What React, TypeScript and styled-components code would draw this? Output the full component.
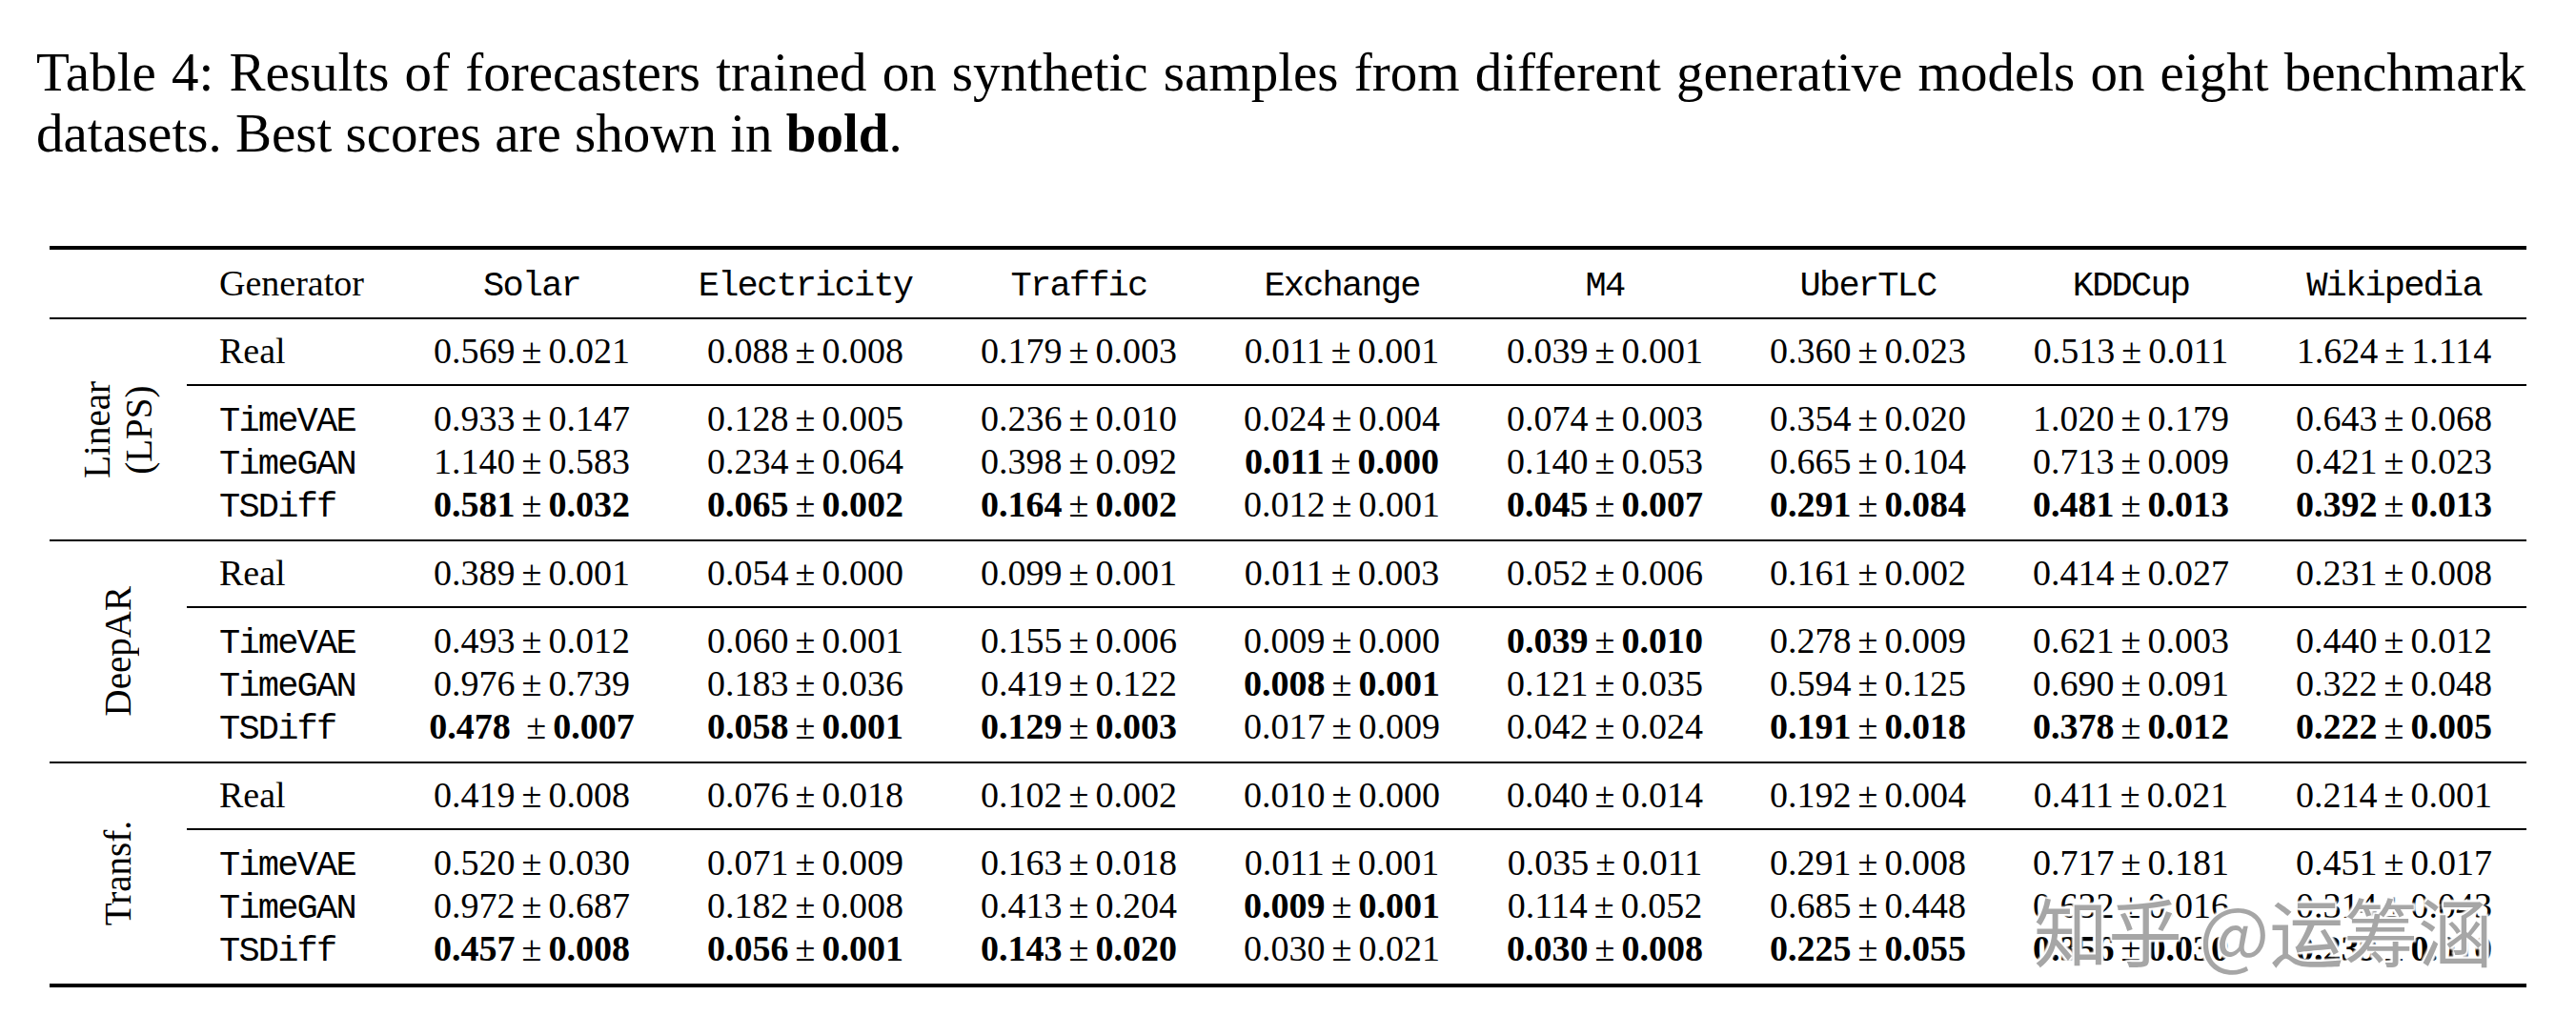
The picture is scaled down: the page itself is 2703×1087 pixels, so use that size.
import React from 'react';
import styled, { createGlobalStyle } from 'styled-components';

const GlobalStyle = createGlobalStyle`
  html, body { margin: 0; padding: 0; background: #ffffff; }
  body { width: 2703px; height: 1087px; overflow: hidden; }
`;

const DATA_COLS = '224px 276px 298px repeat(6, 276px)';
const MONO = `font-family: "Liberation Mono", "Courier New", monospace; font-size: 37px; letter-spacing: -1.8px;`;

const Page = styled.div`
  position: relative;
  width: 2703px;
  height: 1087px;
  font-family: "Liberation Serif", "Times New Roman", serif;
  color: #000;
`;

const Caption = styled.p`
  margin: 0;
  padding: 44px 0 0 38px;
  width: 2612px;
  font-size: 57px;
  line-height: 64px;
  text-align: justify;
  text-align-last: left;
`;

const Table = styled.div`
  margin: 86px 0 0 52px;
  width: 2599px;
  display: flex;
  flex-direction: column;
`;

const Rule = styled.div<{ $w: number }>`
  height: ${(p) => p.$w}px;
  background: #000;
`;

const HeaderRow = styled.div`
  display: grid;
  grid-template-columns: 144px ${DATA_COLS};
  grid-template-rows: 45px;
  align-items: baseline;
  padding: 13px 0;
  font-size: 38px;
  line-height: 45px;
`;

const Group = styled.div`
  display: flex;
  flex-direction: row;
`;

const LabelCell = styled.div`
  width: 144px;
  flex: none;
  display: flex;
  align-items: center;
  justify-content: center;
`;

const RotatedLabel = styled.div`
  writing-mode: vertical-rl;
  transform: rotate(180deg);
  font-size: 39px;
  line-height: 44px;
  text-align: center;
  white-space: nowrap;
`;

const GroupBody = styled.div<{ $bottom: number }>`
  flex: 1;
  display: flex;
  flex-direction: column;
  padding: 11px 0 ${(p) => p.$bottom}px 0;
`;

const CmidRule = styled.div`
  height: 2px;
  background: #000;
  margin: 12px 0;
`;

const Row = styled.div`
  display: grid;
  grid-template-columns: ${DATA_COLS};
  grid-template-rows: 45px;
  align-items: baseline;
  font-size: 38px;
  line-height: 45px;
`;

const NameCell = styled.div<{ $mono?: boolean }>`
  padding-left: 34px;
  text-align: left;
  white-space: nowrap;
  ${(p) => (p.$mono ? MONO : '')}
`;

const HeadCell = styled.div`
  text-align: center;
  white-space: nowrap;
  ${MONO}
`;

const ValueCell = styled.div<{ $bold?: boolean }>`
  text-align: center;
  white-space: pre;
  font-weight: ${(p) => (p.$bold ? 700 : 400)};
`;

const Pm = styled.span`
  font-weight: 400;
  margin: 0 7px;
`;

const Watermark = styled.div`
  position: absolute;
  left: 2134px;
  top: 936px;
  font-family: "Noto Sans CJK SC", sans-serif;
  font-size: 78px;
  line-height: 1;
  white-space: pre;
  color: rgba(150, 150, 150, 0.85);
  text-shadow: 0 0 3px #fff, 0 0 3px #fff, 2px 2px 2px #fff, -2px -2px 2px #fff, 2px -2px 2px #fff, -2px 2px 2px #fff;
`;

type Cell = { v: string; b?: boolean };
type RowData = { name: string; mono: boolean; cells: Cell[] };
type GroupData = { label: string[]; rows: RowData[] };

const c = (v: string, b = false): Cell => ({ v, b });

const columns = ['Solar', 'Electricity', 'Traffic', 'Exchange', 'M4', 'UberTLC', 'KDDCup', 'Wikipedia'];

const groups: GroupData[] = [
  {
    label: ['Linear', '(LPS)'],
    rows: [
      {
        name: 'Real',
        mono: false,
        cells: [c('0.569±0.021'), c('0.088±0.008'), c('0.179±0.003'), c('0.011±0.001'), c('0.039±0.001'), c('0.360±0.023'), c('0.513±0.011'), c('1.624±1.114')],
      },
      {
        name: 'TimeVAE',
        mono: true,
        cells: [c('0.933±0.147'), c('0.128±0.005'), c('0.236±0.010'), c('0.024±0.004'), c('0.074±0.003'), c('0.354±0.020'), c('1.020±0.179'), c('0.643±0.068')],
      },
      {
        name: 'TimeGAN',
        mono: true,
        cells: [c('1.140±0.583'), c('0.234±0.064'), c('0.398±0.092'), c('0.011±0.000', true), c('0.140±0.053'), c('0.665±0.104'), c('0.713±0.009'), c('0.421±0.023')],
      },
      {
        name: 'TSDiff',
        mono: true,
        cells: [c('0.581±0.032', true), c('0.065±0.002', true), c('0.164±0.002', true), c('0.012±0.001'), c('0.045±0.007', true), c('0.291±0.084', true), c('0.481±0.013', true), c('0.392±0.013', true)],
      },
    ],
  },
  {
    label: ['DeepAR'],
    rows: [
      {
        name: 'Real',
        mono: false,
        cells: [c('0.389±0.001'), c('0.054±0.000'), c('0.099±0.001'), c('0.011±0.003'), c('0.052±0.006'), c('0.161±0.002'), c('0.414±0.027'), c('0.231±0.008')],
      },
      {
        name: 'TimeVAE',
        mono: true,
        cells: [c('0.493±0.012'), c('0.060±0.001'), c('0.155±0.006'), c('0.009±0.000'), c('0.039±0.010', true), c('0.278±0.009'), c('0.621±0.003'), c('0.440±0.012')],
      },
      {
        name: 'TimeGAN',
        mono: true,
        cells: [c('0.976±0.739'), c('0.183±0.036'), c('0.419±0.122'), c('0.008±0.001', true), c('0.121±0.035'), c('0.594±0.125'), c('0.690±0.091'), c('0.322±0.048')],
      },
      {
        name: 'TSDiff',
        mono: true,
        cells: [c('0.478 ±0.007', true), c('0.058±0.001', true), c('0.129±0.003', true), c('0.017±0.009'), c('0.042±0.024'), c('0.191±0.018', true), c('0.378±0.012', true), c('0.222±0.005', true)],
      },
    ],
  },
  {
    label: ['Transf.'],
    rows: [
      {
        name: 'Real',
        mono: false,
        cells: [c('0.419±0.008'), c('0.076±0.018'), c('0.102±0.002'), c('0.010±0.000'), c('0.040±0.014'), c('0.192±0.004'), c('0.411±0.021'), c('0.214±0.001')],
      },
      {
        name: 'TimeVAE',
        mono: true,
        cells: [c('0.520±0.030'), c('0.071±0.009'), c('0.163±0.018'), c('0.011±0.001'), c('0.035±0.011'), c('0.291±0.008'), c('0.717±0.181'), c('0.451±0.017')],
      },
      {
        name: 'TimeGAN',
        mono: true,
        cells: [c('0.972±0.687'), c('0.182±0.008'), c('0.413±0.204'), c('0.009±0.001', true), c('0.114±0.052'), c('0.685±0.448'), c('0.632±0.016'), c('0.314±0.043')],
      },
      {
        name: 'TSDiff',
        mono: true,
        cells: [c('0.457±0.008', true), c('0.056±0.001', true), c('0.143±0.020', true), c('0.030±0.021'), c('0.030±0.008', true), c('0.225±0.055', true), c('0.356±0.030', true), c('0.239±0.010', true)],
      },
    ],
  },
];

const Value: React.FC<{ cell: Cell }> = ({ cell }) => {
  const [a, b] = cell.v.split('±');
  return (
    <ValueCell $bold={cell.b}>
      {a}
      <Pm>±</Pm>
      {b}
    </ValueCell>
  );
};

const DataRow: React.FC<{ row: RowData }> = ({ row }) => (
  <Row>
    <NameCell $mono={row.mono}>{row.name}</NameCell>
    {row.cells.map((cell, i) => (
      <Value key={i} cell={cell} />
    ))}
  </Row>
);

const GroupBlock: React.FC<{ group: GroupData }> = ({ group }) => (
  <Group>
    <LabelCell>
      <RotatedLabel>
        {group.label.map((l, i) => (
          <div key={i}>{l}</div>
        ))}
      </RotatedLabel>
    </LabelCell>
    <GroupBody $bottom={14}>
      <DataRow row={group.rows[0]} />
      <CmidRule />
      {group.rows.slice(1).map((r, i) => (
        <DataRow key={i} row={r} />
      ))}
    </GroupBody>
  </Group>
);

export default function App() {
  return (
    <Page>
      <GlobalStyle />
      <Caption>
        Table 4: Results of forecasters trained on synthetic samples from different generative models on eight
        benchmark datasets. Best scores are shown in <b>bold</b>.
      </Caption>
      <Table>
        <Rule $w={4} />
        <HeaderRow>
          <div />
          <NameCell>Generator</NameCell>
          {columns.map((col) => (
            <HeadCell key={col}>{col}</HeadCell>
          ))}
        </HeaderRow>
        <Rule $w={2} />
        {groups.map((g, i) => (
          <React.Fragment key={i}>
            <GroupBlock group={g} />
            <Rule $w={i === groups.length - 1 ? 4 : 2} />
          </React.Fragment>
        ))}
      </Table>
      <Watermark>知乎 @运筹涵</Watermark>
    </Page>
  );
}
